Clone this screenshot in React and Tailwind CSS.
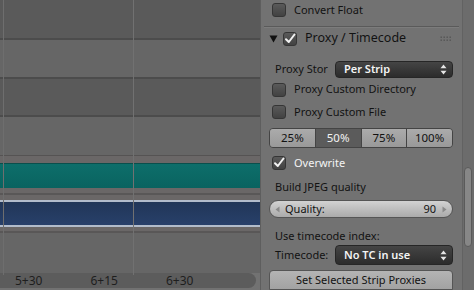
import React from "react";

const font = { fontFamily: '"Noto Sans", "DejaVu Sans", sans-serif' };

function CheckBox({ checked }) {
  return (
    <div className="flex h-[14px] w-[14px] shrink-0 items-center justify-center rounded-[3px] border border-[#353535] bg-gradient-to-b from-[#5a5a5a] to-[#424242]">
      {checked && (
        <svg width="12" height="12" viewBox="0 0 12 12">
          <path d="M2 6.2 L4.8 9 L10.5 1.5" fill="none" stroke="#f2f2f2" strokeWidth="2" strokeLinecap="round" strokeLinejoin="round" />
        </svg>
      )}
    </div>
  );
}

function CheckRow({ label, checked, className = "" }) {
  return (
    <div className={`flex items-center pl-[11px] ${className}`}>
      <CheckBox checked={checked} />
      <span className={`ml-[8px] text-[11px] ${checked ? "text-[#f4f4f4]" : "text-[#121212]"}`}>{label}</span>
    </div>
  );
}

function UpDown() {
  return (
    <svg width="7" height="11" viewBox="0 0 7 11">
      <path d="M3.5 0.5 L6.5 4.3 L0.5 4.3 Z" fill="#e6e6e6" />
      <path d="M3.5 10.5 L6.5 6.7 L0.5 6.7 Z" fill="#e6e6e6" />
    </svg>
  );
}

function Dropdown({ value }) {
  return (
    <div className="flex h-full w-[118px] items-center justify-between rounded-[4px] border border-[#262626] bg-gradient-to-b from-[#454545] to-[#2c2c2c] pl-[8px] pr-[5px]">
      <span className="text-[11px] font-semibold text-[#f4f4f4]">{value}</span>
      <UpDown />
    </div>
  );
}

function Sequencer() {
  const dark = "bg-[#5a5a5a]";
  const light = "bg-[#666666]";
  const line = "h-[2px] bg-[#4c4c4c]";
  return (
    <div className="relative flex h-full w-[260px] flex-col overflow-hidden">
      <div className={`h-[38px] ${dark}`} />
      <div className={line} />
      <div className={`h-[37px] ${light}`} />
      <div className={line} />
      <div className={`h-[36px] ${dark}`} />
      <div className={line} />
      <div className={`h-[38px] ${light}`} />
      <div className="h-[1px] bg-[#555353]" />
      <div className="h-[7px] bg-[#6a6767]" />
      <div className="h-[1px] bg-[#0a4f4c]" />
      <div className="h-[24px] bg-gradient-to-b from-[#0d6e6a] to-[#0a6360]" />
      <div className="h-[5px] bg-[#6a6767]" />
      <div className="h-[2px] bg-[#595757]" />
      <div className="h-[5px] bg-[#6a6767]" />
      <div className="h-[2px] bg-[#b2bccb]" />
      <div className="h-[23px] bg-gradient-to-b from-[#213658] to-[#28406a]" />
      <div className="h-[2px] bg-[#b2bccb]" />
      <div className="h-[4px] bg-[#6a6767]" />
      <div className="h-[2px] bg-[#595757]" />
      <div className={`h-[40px] ${light}`} />
      <div className="mr-[4px] flex h-[15px] items-center rounded-r-[8px] bg-[#5c5c5c] text-[12px] text-[#1e1e1e]">
        <span className="ml-[15px]">5+30</span>
        <span className="ml-[48px]">6+15</span>
        <span className="ml-[48px]">6+30</span>
      </div>
      <div className="absolute left-[3px] top-0 h-[275px] w-[1px] bg-[#6e6e6e]" />
      <div className="absolute left-[133px] top-0 h-[275px] w-[1px] bg-[#717171]" />
    </div>
  );
}

function Panel() {
  const btn = "flex flex-1 items-center justify-center text-[11.5px]";
  return (
    <div className="flex h-full flex-1 flex-col border-l border-[#5e5e5e] bg-[#727272]">
      <CheckRow label="Convert Float" className="h-[20px]" />
      <div className="mx-[3px] mt-[6px] h-[1px] bg-[#5a5a5a]" />
      <div className="mx-[3px] h-[1px] bg-[#7c7c7c]" />
      <div className="mt-[2px] flex h-[18px] items-center pl-[8px] pr-[10px]">
        <svg width="9" height="8" viewBox="0 0 9 8">
          <path d="M0.5 0.5 L8.5 0.5 L4.5 7.5 Z" fill="#111" />
        </svg>
        <div className="ml-[5px]">
          <CheckBox checked />
        </div>
        <span className="ml-[8px] text-[12.5px] text-[#121212]">Proxy / Timecode</span>
        <svg className="ml-auto" width="12" height="6" viewBox="0 0 12 6">
          {[0, 3, 6, 9].map((x) =>
            [0, 3].map((y) => <rect key={`${x}-${y}`} x={x + 0.5} y={y + 0.5} width="1.4" height="1.4" fill="#545454" />)
          )}
        </svg>
      </div>
      <div className="mt-[13px] flex h-[17px] items-center pl-[14px] pr-[9px]">
        <span className="text-[11px] text-[#121212]">Proxy Stor</span>
        <div className="ml-auto h-full">
          <Dropdown value="Per Strip" />
        </div>
      </div>
      <CheckRow label="Proxy Custom Directory" className="mt-[1px] h-[22px]" />
      <CheckRow label="Proxy Custom File" className="h-[23px]" />
      <div className="mx-[8px] mr-[9px] mt-[5px] flex h-[20px] overflow-hidden rounded-[4px] border border-[#444]">
        <div className={`${btn} bg-gradient-to-b from-[#ababab] to-[#999999] text-[#111]`}>25%</div>
        <div className={`${btn} border-l border-[#444] bg-[#5b5b5b] text-[#f2f2f2]`}>50%</div>
        <div className={`${btn} border-l border-[#444] bg-gradient-to-b from-[#ababab] to-[#999999] text-[#111]`}>75%</div>
        <div className={`${btn} border-l border-[#444] bg-gradient-to-b from-[#ababab] to-[#999999] text-[#111]`}>100%</div>
      </div>
      <CheckRow label="Overwrite" checked className="mt-[4px] h-[22px]" />
      <div className="mt-[3px] flex h-[22px] items-center pl-[14px] text-[11px] text-[#121212]">Build JPEG quality</div>
      <div className="mx-[8px] mr-[9px] mt-[2px] flex h-[18px] items-center rounded-full border border-[#555] bg-gradient-to-b from-[#d2d2d2] to-[#aaaaaa] px-[5px] text-[11px] text-[#121212]">
        <svg width="5" height="7" viewBox="0 0 5 7">
          <path d="M4.5 0.5 L4.5 6.5 L0.5 3.5 Z" fill="#8a8a8a" />
        </svg>
        <span className="ml-[5px]">Quality:</span>
        <span className="ml-auto mr-[6px]">90</span>
        <svg width="5" height="7" viewBox="0 0 5 7">
          <path d="M0.5 0.5 L0.5 6.5 L4.5 3.5 Z" fill="#8a8a8a" />
        </svg>
      </div>
      <div className="mt-[9px] flex h-[17px] items-center pl-[14px] text-[11px] text-[#121212]">Use timecode index:</div>
      <div className="mt-[1px] flex h-[20px] items-center pl-[14px] pr-[9px]">
        <span className="text-[11px] text-[#121212]">Timecode:</span>
        <div className="ml-auto h-full">
          <Dropdown value="No TC in use" />
        </div>
      </div>
      <div className="mx-[8px] mr-[9px] mt-[5px] flex h-[20px] shrink-0 items-center justify-center rounded-t-[4px] border border-[#555] bg-gradient-to-b from-[#b4b4b4] to-[#a2a2a2] text-[11px] text-[#121212]">
        Set Selected Strip Proxies
      </div>
    </div>
  );
}

export default function App() {
  return (
    <div className="flex h-[290px] w-[474px] overflow-hidden bg-[#727272]" style={font}>
      <Sequencer />
      <div className="flex w-[202px] flex-col">
        <Panel />
      </div>
      <div className="flex w-[12px] flex-col border-l border-[#626262] bg-[#6c6c6c]">
        <div className="ml-[1px] mt-[167px] h-[80px] w-[8px] rounded-full border border-[#5a5a5a] bg-[#878787]" />
      </div>
    </div>
  );
}
